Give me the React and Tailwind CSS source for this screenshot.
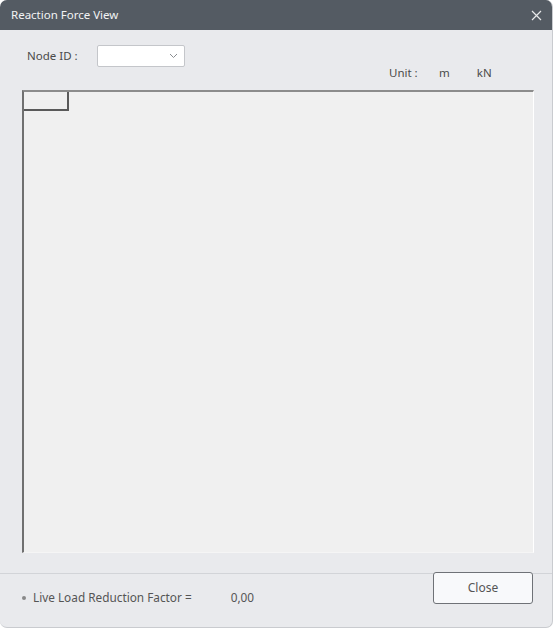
import React from "react";

export default function App() {
  return (
    <div
      className="w-[553px] h-[629px] bg-white text-[12px] text-[#4a4a4a]"
      style={{ fontFamily: '"Noto Sans", "Liberation Sans", sans-serif' }}
    >
      <div className="w-[553px] h-[628px] flex flex-col rounded-[7px] overflow-hidden bg-[#e9eaed] border-r border-b border-[#c9cbcf]">
        {/* Title bar */}
        <div className="h-[30px] shrink-0 bg-[#545b63] flex items-center justify-between pl-[11px] pr-[9px]">
          <span className="text-[#f2f3f4] text-[11.5px] leading-none">Reaction Force View</span>
          <svg width="11" height="11" viewBox="0 0 11 11" className="mr-[1px]">
            <path d="M1 1 L10 10 M10 1 L1 10" stroke="#e8e9ea" strokeWidth="1.2" />
          </svg>
        </div>

        {/* Body */}
        <div className="flex-1 flex flex-col pt-[15px]">
          <div className="flex items-center h-[22px]">
            <span className="ml-[27px] w-[70px] text-[11.5px] leading-none">Node ID :</span>
            <div className="w-[88px] h-[22px] bg-white border border-[#c4c6ca] rounded-[2px] flex items-center justify-end pr-[6px]">
              <svg width="9" height="6" viewBox="0 0 9 6">
                <path d="M1 1 L4.5 4.5 L8 1" stroke="#8a8d91" strokeWidth="1" fill="none" />
              </svg>
            </div>
          </div>
          <div className="flex items-center h-[14px] mt-[-1px] text-[11.5px] leading-none">
            <span className="ml-[389px] w-[50px]">Unit :</span>
            <span>m</span>
            <span className="ml-[27px]">kN</span>
          </div>
          <div className="ml-[22px] mt-[10px] w-[512px] h-[463px] bg-[#f0f0f0] border-t-2 border-l-2 border-t-[#8c8c8c] border-l-[#707070] border-r border-r-white border-b border-b-[#f5f5f5]">
            <div className="w-[45px] h-[19px] border-2 border-[#5a5a5a] border-t-0 border-l-0" />
          </div>

          <div className="mt-[20px] flex-1 border-t border-[#d2d4d8] flex items-start justify-between">
            <div className="mt-[18px] ml-[22px] flex items-center text-[11.8px] leading-none text-[#555]">
              <span className="w-[4px] h-[4px] rounded-full bg-[#888] mr-[7px]" />
              <span>Live Load Reduction Factor =</span>
              <span className="ml-[39px]">0,00</span>
            </div>
            <button className="mt-[-2px] mr-[19px] w-[100px] h-[32px] bg-[#f8f9fb] border border-[#6f7277] rounded-[3px] text-[12px] text-[#555] leading-none">
              Close
            </button>
          </div>
        </div>
      </div>
    </div>
  );
}
